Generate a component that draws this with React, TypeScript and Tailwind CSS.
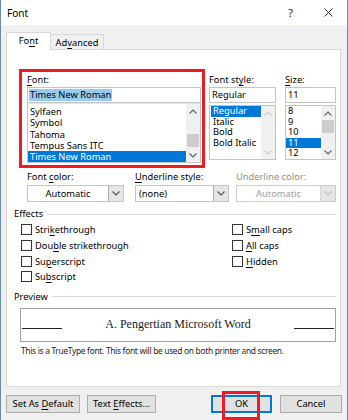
import React, { ReactNode } from "react";

function U({ children }: { children: ReactNode }) {
  return <span className="underline decoration-1 underline-offset-[1.5px]">{children}</span>;
}

function Chevron({ up, color = "#606060" }: { up?: boolean; color?: string }) {
  return (
    <svg width="8" height="5" viewBox="0 0 8 5" fill="none">
      <path d={up ? "M0.5 4.5 L4 1 L7.5 4.5" : "M0.5 0.5 L4 4 L7.5 0.5"} stroke={color} strokeWidth="1.1" />
    </svg>
  );
}

function ScrollBar({ thumb, disabled }: { thumb?: string; disabled?: boolean }) {
  const color = disabled ? "#cdcdcd" : "#606060";
  return (
    <div className="flex w-[14px] shrink-0 flex-col bg-[#f0f0f0]">
      <div className="flex h-[14px] items-center justify-center">
        <Chevron up color={color} />
      </div>
      {thumb && <div className={`mx-[1px] bg-[#cdcdcd] ${thumb}`} />}
      <div className="flex-1" />
      <div className="flex h-[14px] items-center justify-center">
        <Chevron color={color} />
      </div>
    </div>
  );
}

function ListItem({ children, selected, cls }: { children: ReactNode; selected?: boolean; cls: string }) {
  return (
    <div className={`${cls} whitespace-nowrap pl-[2px] ${selected ? "bg-[#0078d7] text-white" : "text-black"}`}>
      {children}
    </div>
  );
}

function Dropdown({ text, center, disabled }: { text: string; center?: boolean; disabled?: boolean }) {
  return (
    <div
      className={`flex h-[17px] border ${disabled ? "border-[#cccccc] text-[#a0a0a0]" : "border-[#c4c4c4] text-black"} bg-white`}
    >
      <div className={`flex flex-1 items-center leading-none ${center ? "justify-center" : "pl-[3px]"}`}>
        <span>{text}</span>
      </div>
      <div
        className={`flex w-[15px] items-center justify-center border-l ${disabled ? "border-[#d4d4d4] bg-[#e6e6e6]" : "border-[#adadad] bg-[#e5e5e5]"}`}
      >
        <Chevron color={disabled ? "#bdbdbd" : "#505050"} />
      </div>
    </div>
  );
}

function Check({ children }: { children: ReactNode }) {
  return (
    <div className="flex h-[15.7px] items-center">
      <div className="h-[11px] w-[11px] shrink-0 border border-[#333333] bg-white" />
      <span className="ml-[3px] leading-none">{children}</span>
    </div>
  );
}

function SectionHead({ title }: { title: string }) {
  return (
    <div className="flex h-[14px] items-center">
      <span className="leading-none">{title}</span>
      <div className="ml-[4px] h-px flex-1 bg-[#dcdcdc]" />
    </div>
  );
}

function Button({ children, w, primary }: { children: ReactNode; w: string; primary?: boolean }) {
  return (
    <div
      className={`${w} flex h-[18px] items-center justify-center leading-none ${primary ? "border-2 border-[#0078d7]" : "border border-[#adadad]"} bg-[#e1e1e1]`}
    >
      <span>{children}</span>
    </div>
  );
}

export default function App() {
  return (
    <div className="relative h-[420px] w-[348px] overflow-hidden border-x border-[#6a8bb0] bg-[#f0f0f0] font-['Noto_Sans',sans-serif] text-[9.3px] text-black">
      {/* Title bar */}
      <div className="flex h-[25px] items-center bg-white pl-[6px]">
        <span className="text-[10px] leading-none">Font</span>
        <span className="ml-auto text-[11px] leading-none text-[#222]">?</span>
        <svg className="ml-[31px] mr-[14px]" width="9" height="9" viewBox="0 0 9 9">
          <path d="M0.5 0.5 L8.5 8.5 M8.5 0.5 L0.5 8.5" stroke="#333" strokeWidth="1" />
        </svg>
      </div>

      {/* Tabs */}
      <div className="mt-[7px] flex items-end pl-[5px]">
        <div className="relative z-10 flex h-[18px] w-[45px] items-center justify-center border-x border-t border-[#d9d9d9] bg-white pb-[1px]">
          <span>
            Fo<U>n</U>t
          </span>
        </div>
        <div className="flex h-[16px] w-[53px] items-center justify-center border-r border-t border-[#d9d9d9] bg-[#f0f0f0]">
          <span>
            Ad<U>v</U>anced
          </span>
        </div>
      </div>

      {/* Panel */}
      <div className="relative -mt-px ml-[5px] h-[338px] w-[335px] border border-[#d9d9d9] bg-white">
        <div className="mt-[23px] flex pl-[20px]">
          {/* Font */}
          <div className="w-[174px]">
            <div className="h-[14px] leading-[14px]">
              <U>F</U>ont:
            </div>
            <div className="flex h-[16px] items-center border border-[#c4c4c4] pl-[1px]">
              <span className="bg-[#99c9ef] px-[1px] leading-[12px]">Times New Roman</span>
            </div>
            <div className="flex h-[60px] border border-[#c4c4c4] border-t-[#e3e3e3]">
              <div className="flex-1 pt-[2px]">
                <ListItem cls="h-[11.25px] leading-[11.25px]">Sylfaen</ListItem>
                <ListItem cls="h-[11.25px] leading-[11.25px]">Symbol</ListItem>
                <ListItem cls="h-[11.25px] leading-[11.25px]">Tahoma</ListItem>
                <ListItem cls="h-[11.25px] leading-[11.25px]">Tempus Sans ITC</ListItem>
                <ListItem cls="h-[11.25px] leading-[11.25px]" selected>
                  Times New Roman
                </ListItem>
              </div>
              <ScrollBar thumb="mt-[16px] h-[13px]" />
            </div>
          </div>

          {/* Font style */}
          <div className="ml-[8px] w-[67px]">
            <div className="h-[14px] leading-[14px]">
              Font st<U>y</U>le:
            </div>
            <div className="flex h-[16px] items-center border border-[#c4c4c4] pl-[2px] leading-none">Regular</div>
            <div className="mt-[2px] flex h-[55px] border border-[#c4c4c4]">
              <div className="flex-1 pl-[1px]">
                <ListItem cls="h-[10.5px] leading-[10.5px]" selected>
                  Regular
                </ListItem>
                <ListItem cls="h-[10.5px] leading-[10.5px]">Italic</ListItem>
                <ListItem cls="h-[10.5px] leading-[10.5px]">Bold</ListItem>
                <ListItem cls="h-[10.5px] leading-[10.5px]">Bold Italic</ListItem>
              </div>
              <ScrollBar disabled />
            </div>
          </div>

          {/* Size */}
          <div className="ml-[9px] w-[51px]">
            <div className="h-[14px] leading-[14px]">
              <U>S</U>ize:
            </div>
            <div className="flex h-[16px] items-center border border-[#c4c4c4] pl-[2px] leading-none">11</div>
            <div className="mt-[2px] flex h-[55px] border border-[#c4c4c4]">
              <div className="flex-1">
                <ListItem cls="h-[10.5px] leading-[10.5px]">8</ListItem>
                <ListItem cls="h-[10.5px] leading-[10.5px]">9</ListItem>
                <ListItem cls="h-[10.5px] leading-[10.5px]">10</ListItem>
                <ListItem cls="h-[10.5px] leading-[10.5px]" selected>
                  11
                </ListItem>
                <ListItem cls="h-[10px] leading-[10px]">12</ListItem>
              </div>
              <ScrollBar thumb="mt-0 h-[13px]" />
            </div>
          </div>
        </div>

        {/* Color / underline row */}
        <div className="mt-[7px] flex pl-[20px]">
          <div className="w-[97px]">
            <div className="h-[15px] leading-[14px]">
              Font <U>c</U>olor:
            </div>
            <Dropdown text="Automatic" center />
          </div>
          <div className="ml-[11px] w-[94px]">
            <div className="h-[15px] leading-[14px]">
              <U>U</U>nderline style:
            </div>
            <Dropdown text="(none)" />
          </div>
          <div className="ml-[7px] w-[100px]">
            <div className="h-[15px] leading-[14px] text-[#8d8d8d]">Underline color:</div>
            <Dropdown text="Automatic" center disabled />
          </div>
        </div>

        {/* Effects */}
        <div className="mt-[5px] pl-[7px] pr-[4px]">
          <SectionHead title="Effects" />
          <div className="mt-px flex pl-[7px]">
            <div className="w-[211px]">
              <Check>
                Stri<U>k</U>ethrough
              </Check>
              <Check>
                Dou<U>b</U>le strikethrough
              </Check>
              <Check>
                Su<U>p</U>erscript
              </Check>
              <Check>
                Su<U>b</U>script
              </Check>
            </div>
            <div>
              <Check>
                S<U>m</U>all caps
              </Check>
              <Check>
                <U>A</U>ll caps
              </Check>
              <Check>
                <U>H</U>idden
              </Check>
            </div>
          </div>

          <div className="mt-[5px]">
            <SectionHead title="Preview" />
          </div>
          <div className="ml-[6px] mt-[4px] flex h-[34px] items-end border border-[#a0a0a0] px-[1px] pb-[11px]">
            <div className="mb-[1px] h-px w-[40px] bg-[#222]" />
            <div className="flex-1 text-center font-['Liberation_Serif',serif] text-[12px] leading-none text-[#1a1a1a]">
              A. Pengertian Microsoft Word
            </div>
            <div className="mb-[1px] h-px w-[40px] bg-[#222]" />
          </div>
          <div className="mt-[3px] whitespace-nowrap pl-[7px] text-[8.4px] leading-[12px] tracking-[-0.3px] text-[#2a1a1a]">
            This is a TrueType font. This font will be used on both printer and screen.
          </div>
        </div>

        {/* Annotation box */}
        <div className="absolute left-[12px] top-[19px] h-[99px] w-[186px] border-[3px] border-[#ed1c24]" />
      </div>

      {/* Buttons */}
      <div className="mt-[8px] flex pl-[5px]">
        <Button w="w-[74px]">
          Set As <U>D</U>efault
        </Button>
        <div className="ml-[7px]">
          <Button w="w-[69px]">
            Text <U>E</U>ffects...
          </Button>
        </div>
        <div className="relative ml-[55px]">
          <Button w="w-[61px]" primary>
            OK
          </Button>
          <div className="absolute left-[11px] top-[-4px] h-[29px] w-[38px] border-[3px] border-[#ed1c24]" />
        </div>
        <div className="ml-[8px]">
          <Button w="w-[62px]">Cancel</Button>
        </div>
      </div>
    </div>
  );
}
